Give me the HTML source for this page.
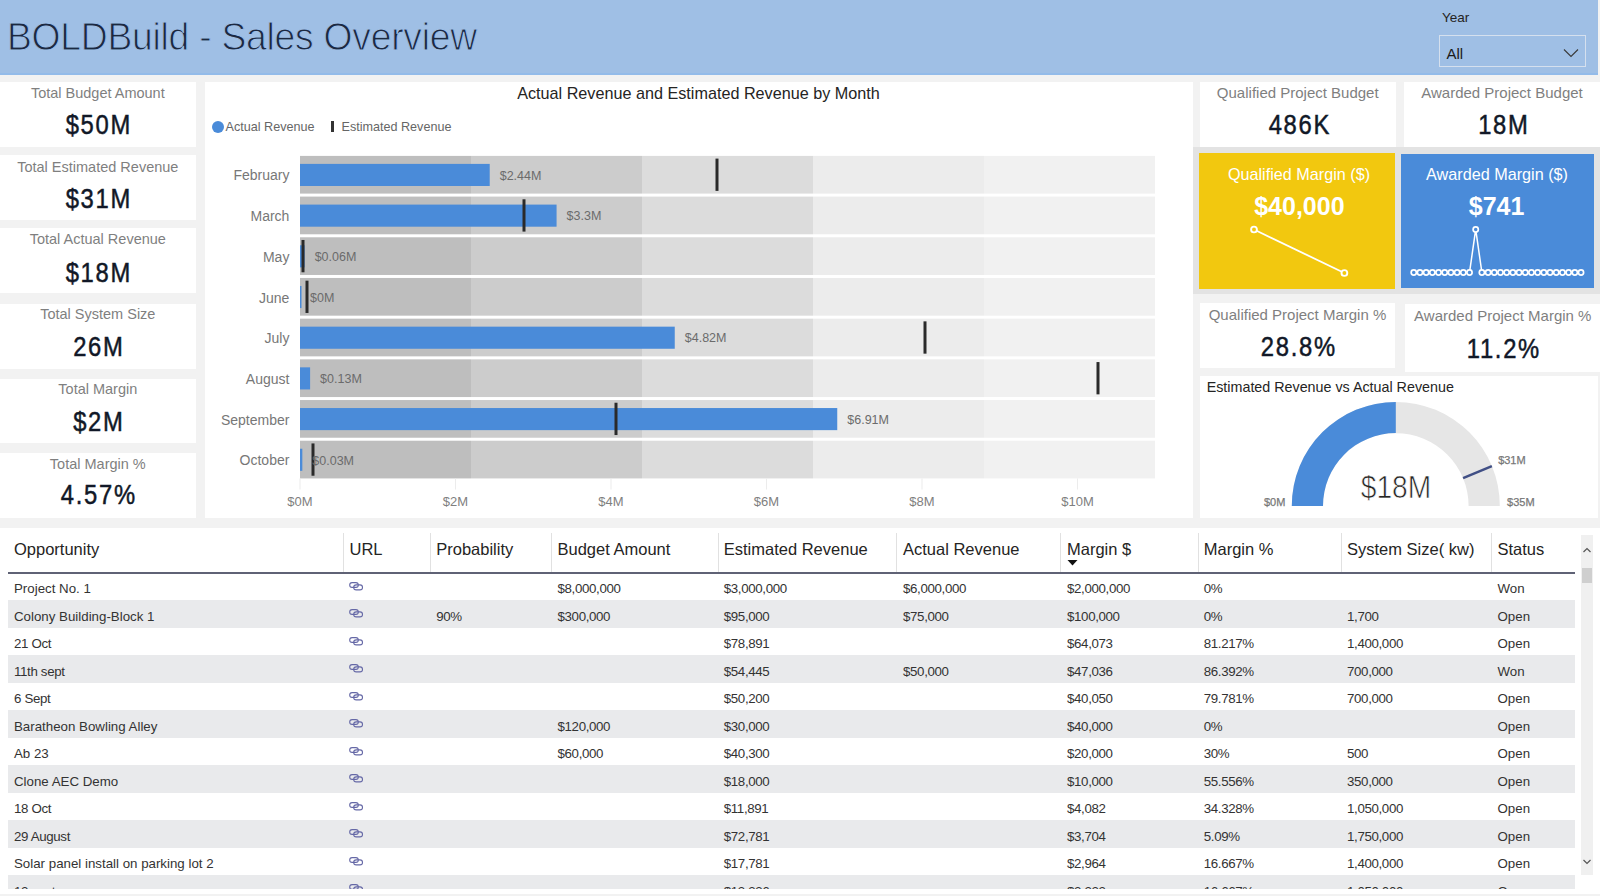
<!DOCTYPE html>
<html><head><meta charset="utf-8"><style>
html,body{margin:0;padding:0;}
body{width:1600px;height:896px;position:relative;overflow:hidden;background:#f2f2f2;font-family:"Liberation Sans", sans-serif;}
.t{position:absolute;white-space:nowrap;}
</style></head><body>
<div style="position:absolute;left:0px;top:0px;width:1598.3px;height:73px;background:#9fbfe5;"></div>
<div style="position:absolute;left:0px;top:73px;width:1598.3px;height:1.5px;background:#93bbe9;"></div>
<div class="t" style="left:6.80px;top:16.79px;font-size:39px;line-height:39px;color:#1c2940;font-weight:400;letter-spacing:-0.25px;-webkit-text-stroke:1px #9fbfe5;transform:scaleX(0.955);transform-origin:0 0;">BOLDBuild - Sales Overview</div>
<div class="t" style="left:1442.00px;top:11.07px;font-size:13.5px;line-height:13.5px;color:#252423;font-weight:400;">Year</div>
<div style="position:absolute;left:1438.5px;top:34.8px;width:145px;height:30px;border:1.5px solid #d5e0ee;box-sizing:content-box"></div>
<div class="t" style="left:1446.50px;top:46.05px;font-size:15px;line-height:15px;color:#1a1a1a;font-weight:400;">All</div>
<svg style="position:absolute;left:0;top:0" width="1600" height="896"><polyline points="1564,49.5 1571,56.5 1578,49.5" fill="none" stroke="#3a3a3a" stroke-width="1.15"/></svg>
<div style="position:absolute;left:0px;top:82px;width:195.5px;height:65px;background:#fff;"></div>
<div class="t" style="left:-502.20px;width:1200px;text-align:center;top:85.73px;font-size:14.5px;line-height:14.5px;color:#7f7f7f;font-weight:400;">Total Budget Amount</div>
<div class="t" style="left:-502.30px;width:1200px;text-align:center;top:111.30px;font-size:28px;line-height:28px;color:#111827;font-weight:400;-webkit-text-stroke:0.5px #111827;letter-spacing:2px;text-indent:2px;transform:scaleX(0.85);">$50M</div>
<div style="position:absolute;left:0px;top:155px;width:195.5px;height:65px;background:#fff;"></div>
<div class="t" style="left:-502.20px;width:1200px;text-align:center;top:159.53px;font-size:14.5px;line-height:14.5px;color:#7f7f7f;font-weight:400;">Total Estimated Revenue</div>
<div class="t" style="left:-502.30px;width:1200px;text-align:center;top:184.90px;font-size:28px;line-height:28px;color:#111827;font-weight:400;-webkit-text-stroke:0.5px #111827;letter-spacing:2px;text-indent:2px;transform:scaleX(0.85);">$31M</div>
<div style="position:absolute;left:0px;top:228px;width:195.5px;height:65px;background:#fff;"></div>
<div class="t" style="left:-502.20px;width:1200px;text-align:center;top:232.33px;font-size:14.5px;line-height:14.5px;color:#7f7f7f;font-weight:400;">Total Actual Revenue</div>
<div class="t" style="left:-502.30px;width:1200px;text-align:center;top:258.50px;font-size:28px;line-height:28px;color:#111827;font-weight:400;-webkit-text-stroke:0.5px #111827;letter-spacing:2px;text-indent:2px;transform:scaleX(0.85);">$18M</div>
<div style="position:absolute;left:0px;top:303.5px;width:195.5px;height:65.0px;background:#fff;"></div>
<div class="t" style="left:-502.20px;width:1200px;text-align:center;top:307.33px;font-size:14.5px;line-height:14.5px;color:#7f7f7f;font-weight:400;">Total System Size</div>
<div class="t" style="left:-502.30px;width:1200px;text-align:center;top:332.70px;font-size:28px;line-height:28px;color:#111827;font-weight:400;-webkit-text-stroke:0.5px #111827;letter-spacing:2px;text-indent:2px;transform:scaleX(0.85);">26M</div>
<div style="position:absolute;left:0px;top:378.5px;width:195.5px;height:64.5px;background:#fff;"></div>
<div class="t" style="left:-502.20px;width:1200px;text-align:center;top:382.23px;font-size:14.5px;line-height:14.5px;color:#7f7f7f;font-weight:400;">Total Margin</div>
<div class="t" style="left:-502.30px;width:1200px;text-align:center;top:407.60px;font-size:28px;line-height:28px;color:#111827;font-weight:400;-webkit-text-stroke:0.5px #111827;letter-spacing:2px;text-indent:2px;transform:scaleX(0.85);">$2M</div>
<div style="position:absolute;left:0px;top:453px;width:195.5px;height:64.5px;background:#fff;"></div>
<div class="t" style="left:-502.20px;width:1200px;text-align:center;top:456.53px;font-size:14.5px;line-height:14.5px;color:#7f7f7f;font-weight:400;">Total Margin %</div>
<div class="t" style="left:-502.30px;width:1200px;text-align:center;top:481.30px;font-size:28px;line-height:28px;color:#111827;font-weight:400;-webkit-text-stroke:0.5px #111827;letter-spacing:2px;text-indent:2px;transform:scaleX(0.85);">4.57%</div>
<div style="position:absolute;left:205px;top:82px;width:987.5px;height:435.5px;background:#fff;"></div>
<div class="t" style="left:98.50px;width:1200px;text-align:center;top:84.69px;font-size:16.2px;line-height:16.2px;color:#252423;font-weight:400;">Actual Revenue and Estimated Revenue by Month</div>
<div style="position:absolute;left:211.7px;top:121.3px;width:12px;height:12px;border-radius:50%;background:#4a8bd9"></div>
<div class="t" style="left:225.60px;top:120.93px;font-size:12.6px;line-height:12.6px;color:#666;font-weight:400;">Actual Revenue</div>
<div style="position:absolute;left:331px;top:120.6px;width:3.3999999999999773px;height:11.900000000000006px;background:#333;"></div>
<div class="t" style="left:341.50px;top:120.93px;font-size:12.6px;line-height:12.6px;color:#666;font-weight:400;">Estimated Revenue</div>
<svg style="position:absolute;left:0;top:0" width="1600" height="896">
<rect x="300" y="155.90" width="171" height="37.7" fill="#bebebe"/>
<rect x="471" y="155.90" width="171" height="37.7" fill="#cccccc"/>
<rect x="642" y="155.90" width="171" height="37.7" fill="#dcdcdc"/>
<rect x="813" y="155.90" width="171" height="37.7" fill="#ececec"/>
<rect x="984" y="155.90" width="171" height="37.7" fill="#f1f1f1"/>
<rect x="300" y="196.59" width="171" height="37.7" fill="#bebebe"/>
<rect x="471" y="196.59" width="171" height="37.7" fill="#cccccc"/>
<rect x="642" y="196.59" width="171" height="37.7" fill="#dcdcdc"/>
<rect x="813" y="196.59" width="171" height="37.7" fill="#ececec"/>
<rect x="984" y="196.59" width="171" height="37.7" fill="#f1f1f1"/>
<rect x="300" y="237.28" width="171" height="37.7" fill="#bebebe"/>
<rect x="471" y="237.28" width="171" height="37.7" fill="#cccccc"/>
<rect x="642" y="237.28" width="171" height="37.7" fill="#dcdcdc"/>
<rect x="813" y="237.28" width="171" height="37.7" fill="#ececec"/>
<rect x="984" y="237.28" width="171" height="37.7" fill="#f1f1f1"/>
<rect x="300" y="277.97" width="171" height="37.7" fill="#bebebe"/>
<rect x="471" y="277.97" width="171" height="37.7" fill="#cccccc"/>
<rect x="642" y="277.97" width="171" height="37.7" fill="#dcdcdc"/>
<rect x="813" y="277.97" width="171" height="37.7" fill="#ececec"/>
<rect x="984" y="277.97" width="171" height="37.7" fill="#f1f1f1"/>
<rect x="300" y="318.66" width="171" height="37.7" fill="#bebebe"/>
<rect x="471" y="318.66" width="171" height="37.7" fill="#cccccc"/>
<rect x="642" y="318.66" width="171" height="37.7" fill="#dcdcdc"/>
<rect x="813" y="318.66" width="171" height="37.7" fill="#ececec"/>
<rect x="984" y="318.66" width="171" height="37.7" fill="#f1f1f1"/>
<rect x="300" y="359.35" width="171" height="37.7" fill="#bebebe"/>
<rect x="471" y="359.35" width="171" height="37.7" fill="#cccccc"/>
<rect x="642" y="359.35" width="171" height="37.7" fill="#dcdcdc"/>
<rect x="813" y="359.35" width="171" height="37.7" fill="#ececec"/>
<rect x="984" y="359.35" width="171" height="37.7" fill="#f1f1f1"/>
<rect x="300" y="400.04" width="171" height="37.7" fill="#bebebe"/>
<rect x="471" y="400.04" width="171" height="37.7" fill="#cccccc"/>
<rect x="642" y="400.04" width="171" height="37.7" fill="#dcdcdc"/>
<rect x="813" y="400.04" width="171" height="37.7" fill="#ececec"/>
<rect x="984" y="400.04" width="171" height="37.7" fill="#f1f1f1"/>
<rect x="300" y="440.73" width="171" height="37.7" fill="#bebebe"/>
<rect x="471" y="440.73" width="171" height="37.7" fill="#cccccc"/>
<rect x="642" y="440.73" width="171" height="37.7" fill="#dcdcdc"/>
<rect x="813" y="440.73" width="171" height="37.7" fill="#ececec"/>
<rect x="984" y="440.73" width="171" height="37.7" fill="#f1f1f1"/>
<rect x="455.00" y="155.9" width="1" height="322.53" fill="#fff" fill-opacity="0"/>
<rect x="610.50" y="155.9" width="1" height="322.53" fill="#fff" fill-opacity="0"/>
<rect x="766.00" y="155.9" width="1" height="322.53" fill="#fff" fill-opacity="0"/>
<rect x="921.50" y="155.9" width="1" height="322.53" fill="#fff" fill-opacity="0"/>
<rect x="1077.00" y="155.9" width="1" height="322.53" fill="#fff" fill-opacity="0"/>
<rect x="300" y="163.90" width="189.71" height="22.1" fill="#4a8bd9"/>
<rect x="715.5" y="158.60" width="3" height="32.3" fill="#2a2a2a"/>
<rect x="300" y="204.59" width="256.57" height="22.1" fill="#4a8bd9"/>
<rect x="522.5" y="199.29" width="3" height="32.3" fill="#2a2a2a"/>
<rect x="300" y="245.28" width="4.67" height="22.1" fill="#4a8bd9"/>
<rect x="301.5" y="239.98" width="3" height="32.3" fill="#2a2a2a"/>
<rect x="300" y="285.97" width="1.50" height="22.1" fill="#4a8bd9"/>
<rect x="305.5" y="280.67" width="3" height="32.3" fill="#2a2a2a"/>
<rect x="300" y="326.66" width="374.75" height="22.1" fill="#4a8bd9"/>
<rect x="923.5" y="321.36" width="3" height="32.3" fill="#2a2a2a"/>
<rect x="300" y="367.35" width="10.11" height="22.1" fill="#4a8bd9"/>
<rect x="1096.5" y="362.05" width="3" height="32.3" fill="#2a2a2a"/>
<rect x="300" y="408.04" width="537.25" height="22.1" fill="#4a8bd9"/>
<rect x="614.5" y="402.74" width="3" height="32.3" fill="#2a2a2a"/>
<rect x="300" y="448.73" width="2.33" height="22.1" fill="#4a8bd9"/>
<rect x="311.5" y="443.43" width="3" height="32.3" fill="#2a2a2a"/>
<rect x="299.50" y="478.5" width="1" height="11" fill="#ececec"/>
<rect x="455.00" y="478.5" width="1" height="11" fill="#ececec"/>
<rect x="610.50" y="478.5" width="1" height="11" fill="#ececec"/>
<rect x="766.00" y="478.5" width="1" height="11" fill="#ececec"/>
<rect x="921.50" y="478.5" width="1" height="11" fill="#ececec"/>
<rect x="1077.00" y="478.5" width="1" height="11" fill="#ececec"/>
</svg>
<div class="t" style="left:-910.60px;width:1200px;text-align:right;top:168.45px;font-size:14px;line-height:14px;color:#777;font-weight:400;">February</div>
<div class="t" style="left:499.71px;top:169.72px;font-size:12.5px;line-height:12.5px;color:#6b6b6b;font-weight:400;">$2.44M</div>
<div class="t" style="left:-910.60px;width:1200px;text-align:right;top:209.14px;font-size:14px;line-height:14px;color:#777;font-weight:400;">March</div>
<div class="t" style="left:566.58px;top:210.41px;font-size:12.5px;line-height:12.5px;color:#6b6b6b;font-weight:400;">$3.3M</div>
<div class="t" style="left:-910.60px;width:1200px;text-align:right;top:249.83px;font-size:14px;line-height:14px;color:#777;font-weight:400;">May</div>
<div class="t" style="left:314.67px;top:251.10px;font-size:12.5px;line-height:12.5px;color:#6b6b6b;font-weight:400;">$0.06M</div>
<div class="t" style="left:-910.60px;width:1200px;text-align:right;top:290.52px;font-size:14px;line-height:14px;color:#777;font-weight:400;">June</div>
<div class="t" style="left:310.00px;top:291.79px;font-size:12.5px;line-height:12.5px;color:#6b6b6b;font-weight:400;">$0M</div>
<div class="t" style="left:-910.60px;width:1200px;text-align:right;top:331.21px;font-size:14px;line-height:14px;color:#777;font-weight:400;">July</div>
<div class="t" style="left:684.75px;top:332.48px;font-size:12.5px;line-height:12.5px;color:#6b6b6b;font-weight:400;">$4.82M</div>
<div class="t" style="left:-910.60px;width:1200px;text-align:right;top:371.90px;font-size:14px;line-height:14px;color:#777;font-weight:400;">August</div>
<div class="t" style="left:320.11px;top:373.17px;font-size:12.5px;line-height:12.5px;color:#6b6b6b;font-weight:400;">$0.13M</div>
<div class="t" style="left:-910.60px;width:1200px;text-align:right;top:412.59px;font-size:14px;line-height:14px;color:#777;font-weight:400;">September</div>
<div class="t" style="left:847.25px;top:413.86px;font-size:12.5px;line-height:12.5px;color:#6b6b6b;font-weight:400;">$6.91M</div>
<div class="t" style="left:-910.60px;width:1200px;text-align:right;top:453.28px;font-size:14px;line-height:14px;color:#777;font-weight:400;">October</div>
<div class="t" style="left:312.33px;top:454.55px;font-size:12.5px;line-height:12.5px;color:#6b6b6b;font-weight:400;">$0.03M</div>
<div class="t" style="left:-300.00px;width:1200px;text-align:center;top:495.00px;font-size:13px;line-height:13px;color:#7f7f7f;font-weight:400;">$0M</div>
<div class="t" style="left:-144.50px;width:1200px;text-align:center;top:495.00px;font-size:13px;line-height:13px;color:#7f7f7f;font-weight:400;">$2M</div>
<div class="t" style="left:11.00px;width:1200px;text-align:center;top:495.00px;font-size:13px;line-height:13px;color:#7f7f7f;font-weight:400;">$4M</div>
<div class="t" style="left:166.50px;width:1200px;text-align:center;top:495.00px;font-size:13px;line-height:13px;color:#7f7f7f;font-weight:400;">$6M</div>
<div class="t" style="left:322.00px;width:1200px;text-align:center;top:495.00px;font-size:13px;line-height:13px;color:#7f7f7f;font-weight:400;">$8M</div>
<div class="t" style="left:477.50px;width:1200px;text-align:center;top:495.00px;font-size:13px;line-height:13px;color:#7f7f7f;font-weight:400;">$10M</div>
<div style="position:absolute;left:1200px;top:82px;width:195.5px;height:65px;background:#fff;"></div>
<div class="t" style="left:697.75px;width:1200px;text-align:center;top:85.30px;font-size:15px;line-height:15px;color:#7f7f7f;font-weight:400;">Qualified Project Budget</div>
<div class="t" style="left:698.50px;width:1200px;text-align:center;top:111.30px;font-size:28px;line-height:28px;color:#111827;font-weight:400;-webkit-text-stroke:0.5px #111827;letter-spacing:2px;text-indent:2px;transform:scaleX(0.85);">486K</div>
<div style="position:absolute;left:1404px;top:82px;width:196px;height:65px;background:#fff;"></div>
<div class="t" style="left:902.00px;width:1200px;text-align:center;top:85.30px;font-size:15px;line-height:15px;color:#7f7f7f;font-weight:400;">Awarded Project Budget</div>
<div class="t" style="left:903.00px;width:1200px;text-align:center;top:111.30px;font-size:28px;line-height:28px;color:#111827;font-weight:400;-webkit-text-stroke:0.5px #111827;letter-spacing:2px;text-indent:2px;transform:scaleX(0.85);">18M</div>
<div style="position:absolute;left:1193px;top:147px;width:407px;height:147px;background:#e3e3e3;"></div>
<div style="position:absolute;left:1199px;top:153px;width:196px;height:135.5px;background:#f2c80f;"></div>
<div style="position:absolute;left:1401px;top:154px;width:192.5px;height:134px;background:#4a8bd9;"></div>
<div class="t" style="left:699.00px;width:1200px;text-align:center;top:166.29px;font-size:16.2px;line-height:16.2px;color:#fff;font-weight:400;">Qualified Margin ($)</div>
<div class="t" style="left:699.40px;width:1200px;text-align:center;top:193.84px;font-size:25px;line-height:25px;color:#fff;font-weight:700;">$40,000</div>
<div class="t" style="left:897.00px;width:1200px;text-align:center;top:166.29px;font-size:16.2px;line-height:16.2px;color:#fff;font-weight:400;">Awarded Margin ($)</div>
<div class="t" style="left:896.60px;width:1200px;text-align:center;top:193.84px;font-size:25px;line-height:25px;color:#fff;font-weight:700;">$741</div>
<div style="position:absolute;left:1200px;top:303px;width:195px;height:65px;background:#fff;"></div>
<div class="t" style="left:697.50px;width:1200px;text-align:center;top:306.50px;font-size:15px;line-height:15px;color:#7f7f7f;font-weight:400;">Qualified Project Margin %</div>
<div class="t" style="left:697.70px;width:1200px;text-align:center;top:332.70px;font-size:28px;line-height:28px;color:#111827;font-weight:400;-webkit-text-stroke:0.5px #111827;letter-spacing:2px;text-indent:2px;transform:scaleX(0.85);">28.8%</div>
<div style="position:absolute;left:1404.5px;top:304px;width:195.5px;height:67.5px;background:#fff;"></div>
<div class="t" style="left:902.75px;width:1200px;text-align:center;top:308.30px;font-size:15px;line-height:15px;color:#7f7f7f;font-weight:400;">Awarded Project Margin %</div>
<div class="t" style="left:903.30px;width:1200px;text-align:center;top:334.80px;font-size:28px;line-height:28px;color:#111827;font-weight:400;-webkit-text-stroke:0.5px #111827;letter-spacing:2px;text-indent:2px;transform:scaleX(0.85);">11.2%</div>
<div style="position:absolute;left:1200px;top:376px;width:398px;height:142px;background:#fff;"></div>
<div class="t" style="left:1206.70px;top:380.40px;font-size:14.3px;line-height:14.3px;color:#252423;font-weight:400;">Estimated Revenue vs Actual Revenue</div>
<svg style="position:absolute;left:0;top:0" width="1600" height="896">
<path d="M1291.80,505.90 A104,104 0 0 1 1499.80,505.90 L1468.60,505.90 A72.8,72.8 0 0 0 1323.00,505.90 Z" fill="#e6e6e6"/>
<path d="M1291.80,505.90 A104,104 0 0 1 1395.80,401.90 L1395.80,433.10 A72.8,72.8 0 0 0 1323.00,505.90 Z" fill="#4a8bd9"/>
<line x1="1463.06" y1="478.04" x2="1491.88" y2="466.10" stroke="#404f85" stroke-width="2.5"/>
<polyline points="1254,229.5 1344.4,273" fill="none" stroke="#fff" stroke-width="1.8"/>
<circle cx="1254" cy="229.5" r="2.9" fill="#f2c80f" stroke="#fff" stroke-width="1.9"/>
<circle cx="1344.4" cy="273" r="2.9" fill="#f2c80f" stroke="#fff" stroke-width="1.9"/>
<polyline points="1413.75,272.50 1419.94,272.50 1426.14,272.50 1432.34,272.50 1438.53,272.50 1444.72,272.50 1450.92,272.50 1457.12,272.50 1463.31,272.50 1469.51,272.50 1475.70,229.40 1481.89,272.50 1488.09,272.50 1494.29,272.50 1500.48,272.50 1506.67,272.50 1512.87,272.50 1519.07,272.50 1525.26,272.50 1531.45,272.50 1537.65,272.50 1543.85,272.50 1550.04,272.50 1556.24,272.50 1562.43,272.50 1568.62,272.50 1574.82,272.50 1581.02,272.50" fill="none" stroke="#fff" stroke-width="1.5"/>
<circle cx="1413.75" cy="272.50" r="2.6" fill="#4a8bd9" stroke="#fff" stroke-width="1.7"/>
<circle cx="1419.94" cy="272.50" r="2.6" fill="#4a8bd9" stroke="#fff" stroke-width="1.7"/>
<circle cx="1426.14" cy="272.50" r="2.6" fill="#4a8bd9" stroke="#fff" stroke-width="1.7"/>
<circle cx="1432.34" cy="272.50" r="2.6" fill="#4a8bd9" stroke="#fff" stroke-width="1.7"/>
<circle cx="1438.53" cy="272.50" r="2.6" fill="#4a8bd9" stroke="#fff" stroke-width="1.7"/>
<circle cx="1444.72" cy="272.50" r="2.6" fill="#4a8bd9" stroke="#fff" stroke-width="1.7"/>
<circle cx="1450.92" cy="272.50" r="2.6" fill="#4a8bd9" stroke="#fff" stroke-width="1.7"/>
<circle cx="1457.12" cy="272.50" r="2.6" fill="#4a8bd9" stroke="#fff" stroke-width="1.7"/>
<circle cx="1463.31" cy="272.50" r="2.6" fill="#4a8bd9" stroke="#fff" stroke-width="1.7"/>
<circle cx="1469.51" cy="272.50" r="2.6" fill="#4a8bd9" stroke="#fff" stroke-width="1.7"/>
<circle cx="1475.70" cy="229.40" r="2.6" fill="#4a8bd9" stroke="#fff" stroke-width="1.7"/>
<circle cx="1481.89" cy="272.50" r="2.6" fill="#4a8bd9" stroke="#fff" stroke-width="1.7"/>
<circle cx="1488.09" cy="272.50" r="2.6" fill="#4a8bd9" stroke="#fff" stroke-width="1.7"/>
<circle cx="1494.29" cy="272.50" r="2.6" fill="#4a8bd9" stroke="#fff" stroke-width="1.7"/>
<circle cx="1500.48" cy="272.50" r="2.6" fill="#4a8bd9" stroke="#fff" stroke-width="1.7"/>
<circle cx="1506.67" cy="272.50" r="2.6" fill="#4a8bd9" stroke="#fff" stroke-width="1.7"/>
<circle cx="1512.87" cy="272.50" r="2.6" fill="#4a8bd9" stroke="#fff" stroke-width="1.7"/>
<circle cx="1519.07" cy="272.50" r="2.6" fill="#4a8bd9" stroke="#fff" stroke-width="1.7"/>
<circle cx="1525.26" cy="272.50" r="2.6" fill="#4a8bd9" stroke="#fff" stroke-width="1.7"/>
<circle cx="1531.45" cy="272.50" r="2.6" fill="#4a8bd9" stroke="#fff" stroke-width="1.7"/>
<circle cx="1537.65" cy="272.50" r="2.6" fill="#4a8bd9" stroke="#fff" stroke-width="1.7"/>
<circle cx="1543.85" cy="272.50" r="2.6" fill="#4a8bd9" stroke="#fff" stroke-width="1.7"/>
<circle cx="1550.04" cy="272.50" r="2.6" fill="#4a8bd9" stroke="#fff" stroke-width="1.7"/>
<circle cx="1556.24" cy="272.50" r="2.6" fill="#4a8bd9" stroke="#fff" stroke-width="1.7"/>
<circle cx="1562.43" cy="272.50" r="2.6" fill="#4a8bd9" stroke="#fff" stroke-width="1.7"/>
<circle cx="1568.62" cy="272.50" r="2.6" fill="#4a8bd9" stroke="#fff" stroke-width="1.7"/>
<circle cx="1574.82" cy="272.50" r="2.6" fill="#4a8bd9" stroke="#fff" stroke-width="1.7"/>
<circle cx="1581.02" cy="272.50" r="2.6" fill="#4a8bd9" stroke="#fff" stroke-width="1.7"/>
</svg>
<div class="t" style="left:795.80px;width:1200px;text-align:center;top:470.91px;font-size:32px;line-height:32px;color:#252423;font-weight:400;transform:scaleX(0.88);-webkit-text-stroke:0.7px #fff;">$18M</div>
<div class="t" style="left:674.70px;width:1200px;text-align:center;top:496.69px;font-size:11px;line-height:11px;color:#777;font-weight:400;-webkit-text-stroke:0.25px #777;">$0M</div>
<div class="t" style="left:920.80px;width:1200px;text-align:center;top:496.69px;font-size:11px;line-height:11px;color:#777;font-weight:400;-webkit-text-stroke:0.25px #777;">$35M</div>
<div class="t" style="left:911.90px;width:1200px;text-align:center;top:454.89px;font-size:11px;line-height:11px;color:#777;font-weight:400;-webkit-text-stroke:0.25px #777;">$31M</div>
<div style="position:absolute;left:0px;top:528px;width:1600px;height:366px;background:#fff;"></div>
<div class="t" style="left:14.00px;top:541.03px;font-size:16.5px;line-height:16.5px;color:#252423;font-weight:400;">Opportunity</div>
<div class="t" style="left:349.50px;top:541.03px;font-size:16.5px;line-height:16.5px;color:#252423;font-weight:400;">URL</div>
<div class="t" style="left:436.25px;top:541.03px;font-size:16.5px;line-height:16.5px;color:#252423;font-weight:400;">Probability</div>
<div class="t" style="left:557.50px;top:541.03px;font-size:16.5px;line-height:16.5px;color:#252423;font-weight:400;">Budget Amount</div>
<div class="t" style="left:723.75px;top:541.03px;font-size:16.5px;line-height:16.5px;color:#252423;font-weight:400;">Estimated Revenue</div>
<div class="t" style="left:903.00px;top:541.03px;font-size:16.5px;line-height:16.5px;color:#252423;font-weight:400;">Actual Revenue</div>
<div class="t" style="left:1067.00px;top:541.03px;font-size:16.5px;line-height:16.5px;color:#252423;font-weight:400;">Margin $</div>
<div class="t" style="left:1203.75px;top:541.03px;font-size:16.5px;line-height:16.5px;color:#252423;font-weight:400;">Margin %</div>
<div class="t" style="left:1347.00px;top:541.03px;font-size:16.5px;line-height:16.5px;color:#252423;font-weight:400;">System Size( kw)</div>
<div class="t" style="left:1497.50px;top:541.03px;font-size:16.5px;line-height:16.5px;color:#252423;font-weight:400;">Status</div>
<div style="position:absolute;left:342.5px;top:533px;width:1.0px;height:40px;background:#e1e1e1;"></div>
<div style="position:absolute;left:429.5px;top:533px;width:1.0px;height:40px;background:#e1e1e1;"></div>
<div style="position:absolute;left:551.25px;top:533px;width:1.0px;height:40px;background:#e1e1e1;"></div>
<div style="position:absolute;left:717.5px;top:533px;width:1.0px;height:40px;background:#e1e1e1;"></div>
<div style="position:absolute;left:896.25px;top:533px;width:1.0px;height:40px;background:#e1e1e1;"></div>
<div style="position:absolute;left:1060px;top:533px;width:1px;height:40px;background:#e1e1e1;"></div>
<div style="position:absolute;left:1197.5px;top:533px;width:1.0px;height:40px;background:#e1e1e1;"></div>
<div style="position:absolute;left:1340.6px;top:533px;width:1.0px;height:40px;background:#e1e1e1;"></div>
<div style="position:absolute;left:1490.6px;top:533px;width:1.0px;height:40px;background:#e1e1e1;"></div>
<div style="position:absolute;left:8px;top:572.2px;width:1567px;height:1.7999999999999545px;background:#5f6275;"></div>
<svg style="position:absolute;left:0;top:0" width="1600" height="896"><polygon points="1067.5,560 1077.5,560 1072.5,565.5" fill="#111"/></svg>
<div style="position:absolute;left:0;top:574.5px;width:1600px;height:314.5px;overflow:hidden">
<div style="position:absolute;left:8px;top:25.40px;width:1567px;height:28.3px;background:#e9eaec"></div>
<div style="position:absolute;left:8px;top:80.40px;width:1567px;height:28.3px;background:#e9eaec"></div>
<div style="position:absolute;left:8px;top:135.40px;width:1567px;height:28.3px;background:#e9eaec"></div>
<div style="position:absolute;left:8px;top:190.40px;width:1567px;height:28.3px;background:#e9eaec"></div>
<div style="position:absolute;left:8px;top:245.40px;width:1567px;height:28.3px;background:#e9eaec"></div>
<div style="position:absolute;left:8px;top:300.40px;width:1567px;height:28.3px;background:#e9eaec"></div>
<div class="t" style="left:14px;top:7.74px;font-size:13.3px;line-height:13.3px;color:#333;">Project No. 1</div>
<svg style="position:absolute;left:349.00px;top:7.00px" width="16" height="10"><rect x="0.7" y="0.6" width="8.6" height="4.8" rx="2.4" fill="none" stroke="#6568a6" stroke-width="1.1"/><rect x="4.7" y="2.9" width="8.8" height="5.0" rx="2.5" fill="none" stroke="#6568a6" stroke-width="1.1"/></svg>
<div class="t" style="left:557.5px;top:7.74px;font-size:13.3px;line-height:13.3px;color:#333;letter-spacing:-0.35px;">$8,000,000</div>
<div class="t" style="left:723.75px;top:7.74px;font-size:13.3px;line-height:13.3px;color:#333;letter-spacing:-0.35px;">$3,000,000</div>
<div class="t" style="left:903px;top:7.74px;font-size:13.3px;line-height:13.3px;color:#333;letter-spacing:-0.35px;">$6,000,000</div>
<div class="t" style="left:1067px;top:7.74px;font-size:13.3px;line-height:13.3px;color:#333;letter-spacing:-0.35px;">$2,000,000</div>
<div class="t" style="left:1203.75px;top:7.74px;font-size:13.3px;line-height:13.3px;color:#333;letter-spacing:-0.35px;">0%</div>
<div class="t" style="left:1497.5px;top:7.74px;font-size:13.3px;line-height:13.3px;color:#333;">Won</div>
<div class="t" style="left:14px;top:35.24px;font-size:13.3px;line-height:13.3px;color:#333;">Colony Building-Block 1</div>
<svg style="position:absolute;left:349.00px;top:34.50px" width="16" height="10"><rect x="0.7" y="0.6" width="8.6" height="4.8" rx="2.4" fill="none" stroke="#6568a6" stroke-width="1.1"/><rect x="4.7" y="2.9" width="8.8" height="5.0" rx="2.5" fill="none" stroke="#6568a6" stroke-width="1.1"/></svg>
<div class="t" style="left:436.25px;top:35.24px;font-size:13.3px;line-height:13.3px;color:#333;letter-spacing:-0.35px;">90%</div>
<div class="t" style="left:557.5px;top:35.24px;font-size:13.3px;line-height:13.3px;color:#333;letter-spacing:-0.35px;">$300,000</div>
<div class="t" style="left:723.75px;top:35.24px;font-size:13.3px;line-height:13.3px;color:#333;letter-spacing:-0.35px;">$95,000</div>
<div class="t" style="left:903px;top:35.24px;font-size:13.3px;line-height:13.3px;color:#333;letter-spacing:-0.35px;">$75,000</div>
<div class="t" style="left:1067px;top:35.24px;font-size:13.3px;line-height:13.3px;color:#333;letter-spacing:-0.35px;">$100,000</div>
<div class="t" style="left:1203.75px;top:35.24px;font-size:13.3px;line-height:13.3px;color:#333;letter-spacing:-0.35px;">0%</div>
<div class="t" style="left:1347px;top:35.24px;font-size:13.3px;line-height:13.3px;color:#333;letter-spacing:-0.35px;">1,700</div>
<div class="t" style="left:1497.5px;top:35.24px;font-size:13.3px;line-height:13.3px;color:#333;">Open</div>
<div class="t" style="left:14px;top:62.74px;font-size:13.3px;line-height:13.3px;color:#333;letter-spacing:-0.35px;">21 Oct</div>
<svg style="position:absolute;left:349.00px;top:62.00px" width="16" height="10"><rect x="0.7" y="0.6" width="8.6" height="4.8" rx="2.4" fill="none" stroke="#6568a6" stroke-width="1.1"/><rect x="4.7" y="2.9" width="8.8" height="5.0" rx="2.5" fill="none" stroke="#6568a6" stroke-width="1.1"/></svg>
<div class="t" style="left:723.75px;top:62.74px;font-size:13.3px;line-height:13.3px;color:#333;letter-spacing:-0.35px;">$78,891</div>
<div class="t" style="left:1067px;top:62.74px;font-size:13.3px;line-height:13.3px;color:#333;letter-spacing:-0.35px;">$64,073</div>
<div class="t" style="left:1203.75px;top:62.74px;font-size:13.3px;line-height:13.3px;color:#333;letter-spacing:-0.35px;">81.217%</div>
<div class="t" style="left:1347px;top:62.74px;font-size:13.3px;line-height:13.3px;color:#333;letter-spacing:-0.35px;">1,400,000</div>
<div class="t" style="left:1497.5px;top:62.74px;font-size:13.3px;line-height:13.3px;color:#333;">Open</div>
<div class="t" style="left:14px;top:90.24px;font-size:13.3px;line-height:13.3px;color:#333;letter-spacing:-0.35px;">11th sept</div>
<svg style="position:absolute;left:349.00px;top:89.50px" width="16" height="10"><rect x="0.7" y="0.6" width="8.6" height="4.8" rx="2.4" fill="none" stroke="#6568a6" stroke-width="1.1"/><rect x="4.7" y="2.9" width="8.8" height="5.0" rx="2.5" fill="none" stroke="#6568a6" stroke-width="1.1"/></svg>
<div class="t" style="left:723.75px;top:90.24px;font-size:13.3px;line-height:13.3px;color:#333;letter-spacing:-0.35px;">$54,445</div>
<div class="t" style="left:903px;top:90.24px;font-size:13.3px;line-height:13.3px;color:#333;letter-spacing:-0.35px;">$50,000</div>
<div class="t" style="left:1067px;top:90.24px;font-size:13.3px;line-height:13.3px;color:#333;letter-spacing:-0.35px;">$47,036</div>
<div class="t" style="left:1203.75px;top:90.24px;font-size:13.3px;line-height:13.3px;color:#333;letter-spacing:-0.35px;">86.392%</div>
<div class="t" style="left:1347px;top:90.24px;font-size:13.3px;line-height:13.3px;color:#333;letter-spacing:-0.35px;">700,000</div>
<div class="t" style="left:1497.5px;top:90.24px;font-size:13.3px;line-height:13.3px;color:#333;">Won</div>
<div class="t" style="left:14px;top:117.74px;font-size:13.3px;line-height:13.3px;color:#333;letter-spacing:-0.35px;">6 Sept</div>
<svg style="position:absolute;left:349.00px;top:117.00px" width="16" height="10"><rect x="0.7" y="0.6" width="8.6" height="4.8" rx="2.4" fill="none" stroke="#6568a6" stroke-width="1.1"/><rect x="4.7" y="2.9" width="8.8" height="5.0" rx="2.5" fill="none" stroke="#6568a6" stroke-width="1.1"/></svg>
<div class="t" style="left:723.75px;top:117.74px;font-size:13.3px;line-height:13.3px;color:#333;letter-spacing:-0.35px;">$50,200</div>
<div class="t" style="left:1067px;top:117.74px;font-size:13.3px;line-height:13.3px;color:#333;letter-spacing:-0.35px;">$40,050</div>
<div class="t" style="left:1203.75px;top:117.74px;font-size:13.3px;line-height:13.3px;color:#333;letter-spacing:-0.35px;">79.781%</div>
<div class="t" style="left:1347px;top:117.74px;font-size:13.3px;line-height:13.3px;color:#333;letter-spacing:-0.35px;">700,000</div>
<div class="t" style="left:1497.5px;top:117.74px;font-size:13.3px;line-height:13.3px;color:#333;">Open</div>
<div class="t" style="left:14px;top:145.24px;font-size:13.3px;line-height:13.3px;color:#333;">Baratheon Bowling Alley</div>
<svg style="position:absolute;left:349.00px;top:144.50px" width="16" height="10"><rect x="0.7" y="0.6" width="8.6" height="4.8" rx="2.4" fill="none" stroke="#6568a6" stroke-width="1.1"/><rect x="4.7" y="2.9" width="8.8" height="5.0" rx="2.5" fill="none" stroke="#6568a6" stroke-width="1.1"/></svg>
<div class="t" style="left:557.5px;top:145.24px;font-size:13.3px;line-height:13.3px;color:#333;letter-spacing:-0.35px;">$120,000</div>
<div class="t" style="left:723.75px;top:145.24px;font-size:13.3px;line-height:13.3px;color:#333;letter-spacing:-0.35px;">$30,000</div>
<div class="t" style="left:1067px;top:145.24px;font-size:13.3px;line-height:13.3px;color:#333;letter-spacing:-0.35px;">$40,000</div>
<div class="t" style="left:1203.75px;top:145.24px;font-size:13.3px;line-height:13.3px;color:#333;letter-spacing:-0.35px;">0%</div>
<div class="t" style="left:1497.5px;top:145.24px;font-size:13.3px;line-height:13.3px;color:#333;">Open</div>
<div class="t" style="left:14px;top:172.74px;font-size:13.3px;line-height:13.3px;color:#333;">Ab 23</div>
<svg style="position:absolute;left:349.00px;top:172.00px" width="16" height="10"><rect x="0.7" y="0.6" width="8.6" height="4.8" rx="2.4" fill="none" stroke="#6568a6" stroke-width="1.1"/><rect x="4.7" y="2.9" width="8.8" height="5.0" rx="2.5" fill="none" stroke="#6568a6" stroke-width="1.1"/></svg>
<div class="t" style="left:557.5px;top:172.74px;font-size:13.3px;line-height:13.3px;color:#333;letter-spacing:-0.35px;">$60,000</div>
<div class="t" style="left:723.75px;top:172.74px;font-size:13.3px;line-height:13.3px;color:#333;letter-spacing:-0.35px;">$40,300</div>
<div class="t" style="left:1067px;top:172.74px;font-size:13.3px;line-height:13.3px;color:#333;letter-spacing:-0.35px;">$20,000</div>
<div class="t" style="left:1203.75px;top:172.74px;font-size:13.3px;line-height:13.3px;color:#333;letter-spacing:-0.35px;">30%</div>
<div class="t" style="left:1347px;top:172.74px;font-size:13.3px;line-height:13.3px;color:#333;letter-spacing:-0.35px;">500</div>
<div class="t" style="left:1497.5px;top:172.74px;font-size:13.3px;line-height:13.3px;color:#333;">Open</div>
<div class="t" style="left:14px;top:200.24px;font-size:13.3px;line-height:13.3px;color:#333;">Clone AEC Demo</div>
<svg style="position:absolute;left:349.00px;top:199.50px" width="16" height="10"><rect x="0.7" y="0.6" width="8.6" height="4.8" rx="2.4" fill="none" stroke="#6568a6" stroke-width="1.1"/><rect x="4.7" y="2.9" width="8.8" height="5.0" rx="2.5" fill="none" stroke="#6568a6" stroke-width="1.1"/></svg>
<div class="t" style="left:723.75px;top:200.24px;font-size:13.3px;line-height:13.3px;color:#333;letter-spacing:-0.35px;">$18,000</div>
<div class="t" style="left:1067px;top:200.24px;font-size:13.3px;line-height:13.3px;color:#333;letter-spacing:-0.35px;">$10,000</div>
<div class="t" style="left:1203.75px;top:200.24px;font-size:13.3px;line-height:13.3px;color:#333;letter-spacing:-0.35px;">55.556%</div>
<div class="t" style="left:1347px;top:200.24px;font-size:13.3px;line-height:13.3px;color:#333;letter-spacing:-0.35px;">350,000</div>
<div class="t" style="left:1497.5px;top:200.24px;font-size:13.3px;line-height:13.3px;color:#333;">Open</div>
<div class="t" style="left:14px;top:227.74px;font-size:13.3px;line-height:13.3px;color:#333;letter-spacing:-0.35px;">18 Oct</div>
<svg style="position:absolute;left:349.00px;top:227.00px" width="16" height="10"><rect x="0.7" y="0.6" width="8.6" height="4.8" rx="2.4" fill="none" stroke="#6568a6" stroke-width="1.1"/><rect x="4.7" y="2.9" width="8.8" height="5.0" rx="2.5" fill="none" stroke="#6568a6" stroke-width="1.1"/></svg>
<div class="t" style="left:723.75px;top:227.74px;font-size:13.3px;line-height:13.3px;color:#333;letter-spacing:-0.35px;">$11,891</div>
<div class="t" style="left:1067px;top:227.74px;font-size:13.3px;line-height:13.3px;color:#333;letter-spacing:-0.35px;">$4,082</div>
<div class="t" style="left:1203.75px;top:227.74px;font-size:13.3px;line-height:13.3px;color:#333;letter-spacing:-0.35px;">34.328%</div>
<div class="t" style="left:1347px;top:227.74px;font-size:13.3px;line-height:13.3px;color:#333;letter-spacing:-0.35px;">1,050,000</div>
<div class="t" style="left:1497.5px;top:227.74px;font-size:13.3px;line-height:13.3px;color:#333;">Open</div>
<div class="t" style="left:14px;top:255.24px;font-size:13.3px;line-height:13.3px;color:#333;letter-spacing:-0.35px;">29 August</div>
<svg style="position:absolute;left:349.00px;top:254.50px" width="16" height="10"><rect x="0.7" y="0.6" width="8.6" height="4.8" rx="2.4" fill="none" stroke="#6568a6" stroke-width="1.1"/><rect x="4.7" y="2.9" width="8.8" height="5.0" rx="2.5" fill="none" stroke="#6568a6" stroke-width="1.1"/></svg>
<div class="t" style="left:723.75px;top:255.24px;font-size:13.3px;line-height:13.3px;color:#333;letter-spacing:-0.35px;">$72,781</div>
<div class="t" style="left:1067px;top:255.24px;font-size:13.3px;line-height:13.3px;color:#333;letter-spacing:-0.35px;">$3,704</div>
<div class="t" style="left:1203.75px;top:255.24px;font-size:13.3px;line-height:13.3px;color:#333;letter-spacing:-0.35px;">5.09%</div>
<div class="t" style="left:1347px;top:255.24px;font-size:13.3px;line-height:13.3px;color:#333;letter-spacing:-0.35px;">1,750,000</div>
<div class="t" style="left:1497.5px;top:255.24px;font-size:13.3px;line-height:13.3px;color:#333;">Open</div>
<div class="t" style="left:14px;top:282.74px;font-size:13.3px;line-height:13.3px;color:#333;">Solar panel install on parking lot 2</div>
<svg style="position:absolute;left:349.00px;top:282.00px" width="16" height="10"><rect x="0.7" y="0.6" width="8.6" height="4.8" rx="2.4" fill="none" stroke="#6568a6" stroke-width="1.1"/><rect x="4.7" y="2.9" width="8.8" height="5.0" rx="2.5" fill="none" stroke="#6568a6" stroke-width="1.1"/></svg>
<div class="t" style="left:723.75px;top:282.74px;font-size:13.3px;line-height:13.3px;color:#333;letter-spacing:-0.35px;">$17,781</div>
<div class="t" style="left:1067px;top:282.74px;font-size:13.3px;line-height:13.3px;color:#333;letter-spacing:-0.35px;">$2,964</div>
<div class="t" style="left:1203.75px;top:282.74px;font-size:13.3px;line-height:13.3px;color:#333;letter-spacing:-0.35px;">16.667%</div>
<div class="t" style="left:1347px;top:282.74px;font-size:13.3px;line-height:13.3px;color:#333;letter-spacing:-0.35px;">1,400,000</div>
<div class="t" style="left:1497.5px;top:282.74px;font-size:13.3px;line-height:13.3px;color:#333;">Open</div>
<div class="t" style="left:14px;top:310.24px;font-size:13.3px;line-height:13.3px;color:#333;letter-spacing:-0.35px;">12 sept</div>
<svg style="position:absolute;left:349.00px;top:309.50px" width="16" height="10"><rect x="0.7" y="0.6" width="8.6" height="4.8" rx="2.4" fill="none" stroke="#6568a6" stroke-width="1.1"/><rect x="4.7" y="2.9" width="8.8" height="5.0" rx="2.5" fill="none" stroke="#6568a6" stroke-width="1.1"/></svg>
<div class="t" style="left:723.75px;top:310.24px;font-size:13.3px;line-height:13.3px;color:#333;letter-spacing:-0.35px;">$13,336</div>
<div class="t" style="left:1067px;top:310.24px;font-size:13.3px;line-height:13.3px;color:#333;letter-spacing:-0.35px;">$2,222</div>
<div class="t" style="left:1203.75px;top:310.24px;font-size:13.3px;line-height:13.3px;color:#333;letter-spacing:-0.35px;">16.667%</div>
<div class="t" style="left:1347px;top:310.24px;font-size:13.3px;line-height:13.3px;color:#333;letter-spacing:-0.35px;">1,050,000</div>
<div class="t" style="left:1497.5px;top:310.24px;font-size:13.3px;line-height:13.3px;color:#333;">Open</div>
</div>
<div style="position:absolute;left:1581px;top:534.5px;width:12px;height:340.5px;background:#f0f0f0;"></div>
<div style="position:absolute;left:1582px;top:568px;width:10px;height:14.5px;background:#cfcfcf;"></div>
<svg style="position:absolute;left:0;top:0" width="1600" height="896"><polyline points="1583.5,552 1587,548.5 1590.5,552" fill="none" stroke="#555" stroke-width="1.2"/><polyline points="1583.5,860 1587,863.5 1590.5,860" fill="none" stroke="#555" stroke-width="1.2"/></svg>
</body></html>
